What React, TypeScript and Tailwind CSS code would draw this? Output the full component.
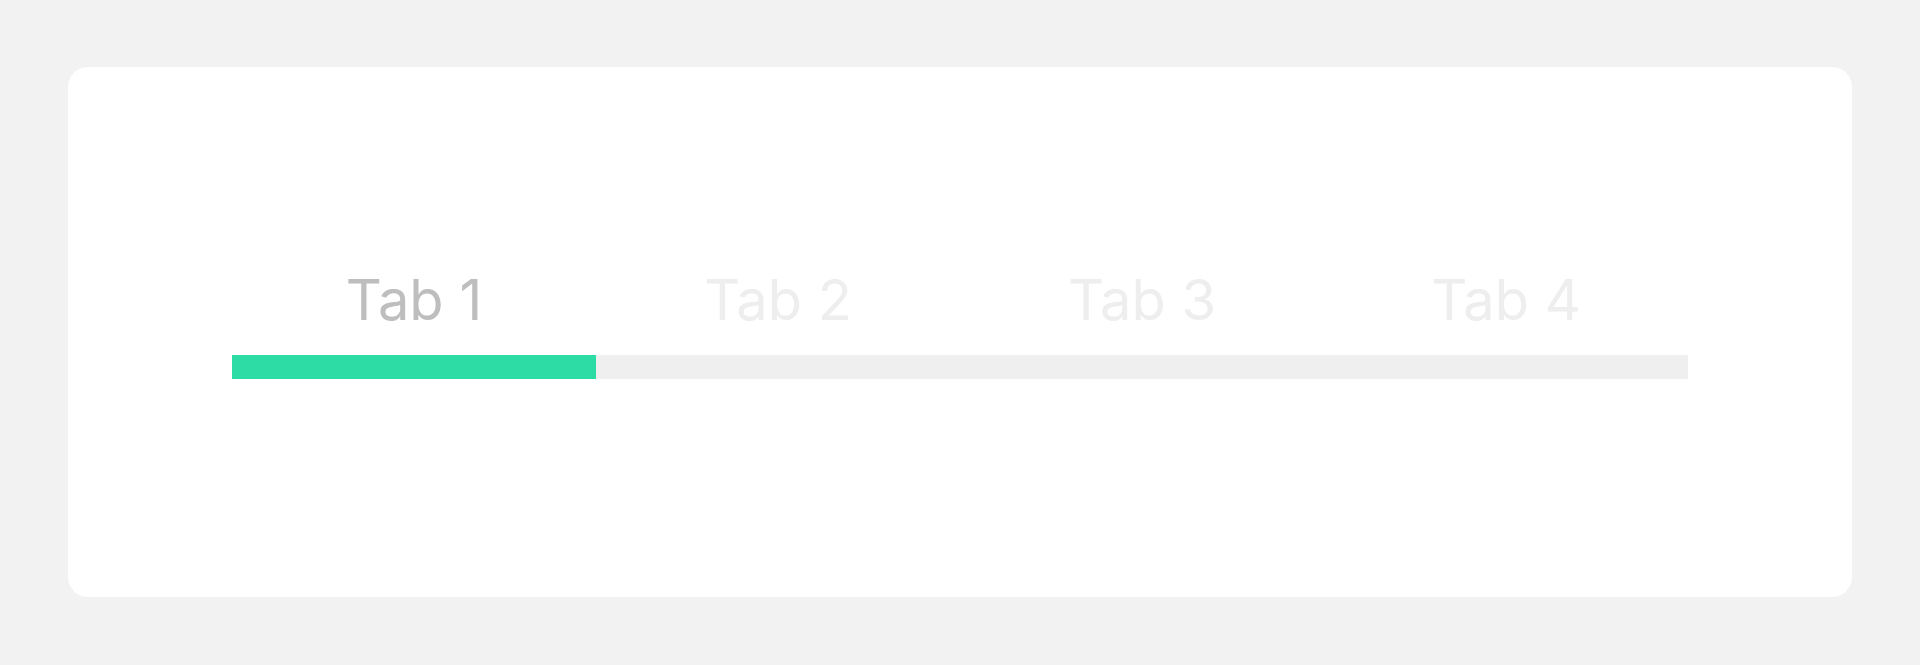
const tabs = ['Tab 1', 'Tab 2', 'Tab 3', 'Tab 4'];

export default function App() {
  const active = 0;

  return (
    <div className="min-h-[665px] bg-[#f2f2f2] px-[68px] pt-[67px] pb-[68px] font-['Inter',sans-serif]">
      <div className="h-[530px] rounded-[20px] bg-white px-[164px] pt-[205px]">
        <div className="flex">
          {tabs.map((tab, i) => (
            <div
              key={tab}
              className={
                i === active
                  ? 'flex-1 text-center text-[56px] leading-[56px] font-normal text-[#bebebe]'
                  : 'flex-1 text-center text-[56px] leading-[56px] font-normal text-[#eeeeee]'
              }
            >
              {tab}
            </div>
          ))}
        </div>
        <div className="mt-[27px] flex h-[24px] bg-[#efefef]">
          <div className="h-full w-1/4 bg-[#2ddca4]" />
        </div>
      </div>
    </div>
  );
}
